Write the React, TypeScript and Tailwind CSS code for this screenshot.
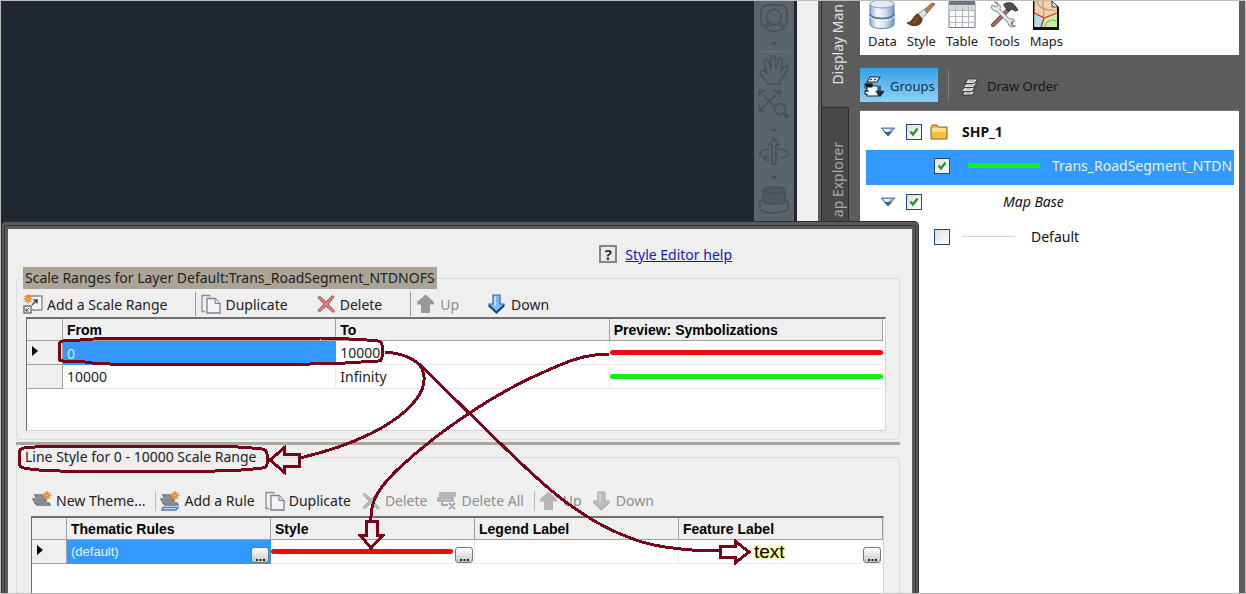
import type { ReactNode } from "react";

const Spark = ({ x, y }: { x: number; y: number }) => (
  <g stroke="#f08a2c" strokeWidth="1.6">
    <path d={`M${x - 4.5} ${y}h9M${x} ${y - 4.5}v9M${x - 3} ${y - 3}l6 6M${x + 3} ${y - 3}l-6 6`} />
    <circle cx={x} cy={y} r="1.6" fill="#ffe9a8" />
  </g>
);

const AddRangeIcon = () => (
  <svg width="20" height="20" viewBox="0 0 20 20" fill="none">
    <path d="M3 2H19V16H9" fill="#f4f4f4" stroke="#8b8d92" strokeWidth="1.4" />
    <path d="M9 11L14 6M10.5 6H14V9.5" stroke="#3b4148" strokeWidth="1.5" />
    <rect x="1" y="12" width="7" height="7" fill="#fff" stroke="#666a70" strokeWidth="1.4" />
    <path d="M3 17L6 14M3 14.5V17H5.5" stroke="#3b4148" />
    <Spark x={5} y={5} />
  </svg>
);

const DuplicateIcon = () => (
  <svg width="20" height="20" viewBox="0 0 20 20" fill="none">
    <path d="M4 17.5H1V1.5H9" stroke="#8a8c96" strokeWidth="1.3" />
    <path d="M9 1.5V3" stroke="#8a8c96" />
    <path d="M6 4.5H14L19 9.5V19H6Z" fill="#f3f4f6" stroke="#7d808c" strokeWidth="1.3" />
    <path d="M14 4.5V9.5H19" fill="#dcdee4" stroke="#7d808c" />
  </svg>
);

const DeleteIcon = ({ off }: { off?: boolean }) => (
  <svg width="20" height="20" viewBox="0 0 20 20" fill="none">
    <path d="M2 3.5L3.5 2L10 8L16.5 1.5L18 3L12 10L18.5 17L17 18.5L10 12L3.5 18L2 16.5L8 10Z"
      fill={off ? "#b9b9b9" : "#e98080"} stroke={off ? "#b0b0b0" : "#97474b"} strokeWidth="1" />
  </svg>
);

const DeleteAllIcon = () => (
  <svg width="20" height="20" viewBox="0 0 20 20" fill="none" stroke="#a9a9a9" strokeWidth="1.6">
    <path d="M3 2H18V5H3ZM1 7H16V10H1Z" fill="#c4c4c4" />
    <path d="M5 11V14H11M12 12L18 18M18 12L12 18" strokeWidth="2" />
  </svg>
);

const UpIcon = ({ light }: { light?: boolean }) => (
  <svg width="20" height="20" viewBox="0 0 20 20">
    <path d="M9.5 0.5L18 8V10.5H14V19H5V10.5H1V8Z" fill={light ? "#b7b7b7" : "#999"} />
  </svg>
);

const DownIcon = ({ off }: { off?: boolean }) => (
  <svg width="20" height="20" viewBox="0 0 20 20">
    <path d="M6 1H13V10H17V12L9.5 19L2 12V10H6Z" fill={off ? "#bdbdbd" : "#7cb9f2"} stroke={off ? "#adadad" : "#3464a4"} strokeWidth="1.2" />
    <path d="M8 2V12" stroke={off ? "#d0d0d0" : "#bfe0ff"} strokeWidth="2" />
    {!off && <path d="M2 11.5L9.5 18.5L17 11.5" fill="none" stroke="#1b3a78" strokeWidth="1.8" />}
  </svg>
);

const RulesIcon = ({ add }: { add?: boolean }) => (
  <svg width="20" height="20" viewBox="0 0 20 20" fill="none" stroke="#6b6f78" strokeWidth="1.4">
    <path d="M3 4H11L12 6H4Z" fill="#d8d9dd" />
    <path d="M1 8H13L14 10H2Z" fill="#d8d9dd" />
    <path d="M3 12H17L18 14H5Z" fill="#d8d9dd" />
    {add && <path d="M3 16.5H18L16 19H2Z" fill="#dcecff" stroke="#3f7fd0" />}
    <Spark x={15} y={4.5} />
  </svg>
);

const LayersIcon = () => (
  <svg width="18" height="18" viewBox="0 0 18 18" fill="#e4e4e4" stroke="#2a2a2a" strokeWidth="0.9">
    <path d="M1 17L4 13H14L11 17Z" />
    <path d="M2 13.500L1 12.500L4 9H14L11 13.500Z" />
    <path d="M4 9.500L3 8.500L6 5H16L12 9.500Z" />
    <path d="M4 5.500L7 1H17L13 5.500Z" />
    <path d="M8 3H13M6 7H12M5 11H10M5 15H10" stroke="#8e8e8e" />
  </svg>
);

const GroupsIcon = () => (
  <svg width="20" height="22" viewBox="0 0 20 22" stroke="#262b30" strokeWidth="1.1">
    <path d="M3 6L6 1H16L13 6Z" fill="#eef6fb" />
    <path d="M6 4L8 3M10 4L12 3" />
    <path d="M1 8H8L9 10H14V20H3V18H1V15H3V12H1Z" fill="#f7fbfd" />
    <path d="M1 8H8V11H2M1 15H5" />
    <path d="M16 10V19M12.500 15.500H19.500L16 20Z" fill="#262b30" strokeWidth="1.4" />
  </svg>
);

const DataIcon = () => (
  <svg width="28" height="28" viewBox="0 0 28 28">
    <linearGradient id="drum">
      <stop stopColor="#8fb0d6" />
      <stop offset="0.3" stopColor="#f6fafe" />
      <stop offset="0.65" stopColor="#cfdff0" />
      <stop offset="1" stopColor="#6f94c2" />
    </linearGradient>
    <path d="M2 3V23C2 29 26 29 26 23V3Z" fill="url(#drum)" stroke="#5d7ea8" />
    <ellipse cx="14" cy="3" rx="12" ry="4" fill="#e1ebf6" stroke="#7f9bbd" />
    <path d="M2 13C2 19 26 19 26 13" fill="none" stroke="#4f73a3" strokeWidth="1.600" />
    <path d="M2 15C2 21 26 21 26 15" fill="none" stroke="#f2f7fc" />
  </svg>
);

const StyleIcon = () => (
  <svg width="28" height="28" viewBox="0 0 28 28">
    <path d="M25 2L17 9L20 12L28 3Z" fill="#c47a3c" stroke="#7c4925" strokeWidth="0.8" />
    <path d="M17 8L20 12L15 18L11 13Z" fill="#dfe1e4" stroke="#7a7c80" strokeWidth="0.8" />
    <path d="M11 13C6 14 7 20 0 22C5 26 15 26 15 18Z" fill="#6b3d22" stroke="#45240f" strokeWidth="0.8" />
    <path d="M11 16C9 18 9 21 6 22" stroke="#a86c44" fill="none" />
  </svg>
);

const TableIcon = () => (
  <svg width="28" height="28" viewBox="0 0 28 28">
    <path d="M1 1H27V26.500H1Z" fill="#fcfcfd" stroke="#777b82" />
    <path d="M1 0H27V4H1Z" fill="#6f7680" />
    <path d="M1 4H27V9H1Z" fill="#d4d8de" />
    <path d="M1 9.500H27M1 15.500H27M1 21.500H27M7.500 5V26M14.500 5V26M20.500 5V26" stroke="#b4b7bd" />
  </svg>
);

const ToolsIcon = () => (
  <svg width="28" height="28" viewBox="0 0 28 28" strokeLinecap="round" fill="none">
    <path d="M3 24L19 8" stroke="#5a3b32" strokeWidth="4" />
    <path d="M3 24L19 8" stroke="#a5786a" strokeWidth="2.400" />
    <path d="M14 3C18 1 23 1 25 5L28 9L25 10L22 8L18 10L15 6Z" fill="#4b4e54" stroke="#303236" />
    <path d="M7 8L21 22" stroke="#777b82" strokeWidth="4.500" />
    <path d="M5 1L8 4L6 6L2 4C0 8 4 11 8 10C12 8 11 2 5 1Z" fill="#e3e5e8" stroke="#777b82" />
    <path d="M25 25L21 24L21 21L25 20C23 16 18 18 18 21C18 26 22 27 25 25Z" fill="#e3e5e8" stroke="#777b82" />
    <path d="M7 8L20 21" stroke="#e3e5e8" strokeWidth="3" />
  </svg>
);

const MapsIcon = () => (
  <svg width="28" height="30" viewBox="0 0 28 30">
    <path d="M1 0H20L27 6V29H1Z" fill="#111" />
    <path d="M2.500 0H19L25 6V26H2.500Z" fill="#f9cda8" />
    <path d="M2.500 12L12 17L9 26H2.500Z" fill="#b5dfe8" />
    <path d="M12 17L25 12V26H9Z" fill="#c6f09a" />
    <path d="M5 0C7 8 15 10 25 9M13 26C14 20 19 18 25 20M12 0C8 4 14 8 11 16" fill="none" stroke="#b2a37c" strokeWidth="1.200" />
    <path d="M2.500 12L12 17L25 12M12 17L9 26" fill="none" stroke="#c53a2b" strokeWidth="1.300" />
    <path d="M20 0V6H26Z" fill="#e8f1fa" stroke="#243c5e" />
  </svg>
);

const FolderIcon = () => (
  <svg width="18" height="16" viewBox="0 0 18 16">
    <path d="M1 15V3H2V1H7L8 3H17V15Z" fill="#f4bf3d" stroke="#8d6420" />
    <path d="M2 4H16V8H2Z" fill="#fde08a" />
  </svg>
);

const Expander = () => (
  <button aria-label="Collapse" className="shrink-0">
    <svg width="16" height="12" viewBox="0 0 16 12">
      <path d="M1 2H15L8 10Z" fill="#86adcb" stroke="#56789a" strokeLinejoin="round" />
      <path d="M3 3H11L7 7Z" fill="#e6f3fc" />
      <path d="M4 6L8 10L12 6Z" fill="#3f6184" />
    </svg>
  </button>
);

const Check = ({ id, checked }: { id: string; checked?: boolean }) => (
  <span className="grid shrink-0">
    <input id={id} type="checkbox" defaultChecked={checked}
      className="peer col-start-1 row-start-1 size-4 appearance-none border border-[#1f4a78] bg-linear-to-br from-[#dcdfe0] to-white" />
    <svg viewBox="0 0 16 16" className="pointer-events-none invisible col-start-1 row-start-1 size-4 peer-checked:visible">
      <path d="M4.500 7.500L7 10.500L11.500 4.500" fill="none" stroke="#2f9433" strokeWidth="2.400" />
    </svg>
  </span>
);

const NavBar = () => (
  <div className="w-10 shrink-0 bg-[#5c646b]">
    <svg width="40" height="220" viewBox="754 1 40 220" fill="none" stroke="#474f57" strokeWidth="1.5">
      <path d="M767 5H781Q787 6 787 14V19Q786 31 774 31Q761 31 761 18V14Q761 6 767 5Z" />
      <circle cx="774" cy="17" r="7.500" />
      <path d="M765 26L769 22M784 26L779 22M766 27Q774 22 783 27" />
      <path d="M770 42H778L774 45ZM770 129H778L774 132ZM770 176H778L774 179Z" fill="#474f57" stroke="none" />
      <path d="M757 51.500H791" stroke="#6b7379" strokeWidth="1" />
      <path d="M768 84C765 79 760 75 760 72C762 69 765 71 767 74L764 61C765 58 768 59 769 62L771 70L771 58C772 55 775 56 775 58L776 69L779 59C781 57 783 59 782 61L781 71L785 66C788 65 789 67 787 70L781 80L780 84Z" />
      <path d="M760 92L776 108M779 92L760 110M759 97V91H765M774 91H780V97M759 105V111H765" />
      <circle cx="780" cy="109" r="5.500" fill="#5c646b" />
      <path d="M784 113L788 118" strokeWidth="3.500" />
      <path d="M772 164V145H769L774 138L779 145H776V164Z" />
      <path d="M769 149C756 151 757 158 770 158M779 149C791 151 791 157 780 158M768 154L764 158L768 162" />
      <path d="M763 202V190C763 186 785 186 785 190V202C782 205 766 205 763 202Z" fill="#50585f" />
      <path d="M763 190C766 194 782 194 785 190M763 200H760V209C763 214 785 214 788 209V200H785" />
    </svg>
  </div>
);

const paletteTools = [
  { name: "Data", icon: <DataIcon /> },
  { name: "Style", icon: <StyleIcon /> },
  { name: "Table", icon: <TableIcon /> },
  { name: "Tools", icon: <ToolsIcon /> },
  { name: "Maps", icon: <MapsIcon /> },
];

const Palette = () => (
  <div className="flex w-[427px] shrink-0 bg-[#5c5c5c] pr-1.5">
    <div className="flex w-[42px] shrink-0 flex-col pl-[3px]">
      <button className="flex h-[106px] w-[30px] items-end border-l border-[#333] pb-[22px] pl-1.5 text-[14px] leading-5 text-[#e2e2e2]">
        <span className="rotate-180 [writing-mode:vertical-rl]">Display Man</span>
      </button>
      <button className="flex w-[28px] flex-1 items-start border border-[#2e2e2e] bg-[#484848] pt-[34px] pl-1.5 text-[14px] leading-5 text-[#a8a8a8]">
        <span className="rotate-180 [writing-mode:vertical-rl]">ap Explorer</span>
      </button>
    </div>
    <div className="flex min-w-0 flex-1 flex-col">
      <div className="flex h-[54px] gap-2.5 bg-white pl-2">
        {paletteTools.map((t) => (
          <button key={t.name} className="flex flex-col items-center text-[13px] leading-5 text-[#222]">
            <span className="h-[30px]">{t.icon}</span>
            {t.name}
          </button>
        ))}
      </div>
      <div className="flex h-[55px] items-center pt-1 text-[13px] text-[#161616]">
        <button className="flex h-[34px] w-[78px] items-center gap-1.5 bg-linear-to-b from-[#2ba3e6] to-[#8fd0f5] pt-1 pl-1 text-[#123048]">
          <GroupsIcon />
          Groups
        </button>
        <span className="ml-2.5 h-8 w-px bg-[#7d7d7d]" />
        <button className="ml-3 flex items-center gap-2 pt-1">
          <LayersIcon />
          Draw Order
        </button>
      </div>
      <div className="flex-1 border-t border-[#777] bg-white pt-0.5 pr-[5px] pl-1.5 text-[14px] text-[#111]">
        <div className="flex h-[37px] items-center pl-[14px]">
          <Expander />
          <span className="ml-2.5 flex"><Check id="shp" checked /></span>
          <span className="mr-3.5 ml-2"><FolderIcon /></span>
          <label htmlFor="shp" className="font-bold">SHP_1</label>
        </div>
        <div className="flex h-[35px] items-center overflow-hidden bg-[#3399ff] pb-1 pl-[68px] text-[#e6f4ff]">
          <Check id="road" checked />
          <span className="mr-3 ml-[18px] h-[5px] w-[72px] shrink-0 bg-[#0bf41b]" />
          <label htmlFor="road">Trans_RoadSegment_NTDN</label>
        </div>
        <div className="flex h-[35px] items-center pb-0.5 pl-[14px]">
          <Expander />
          <span className="ml-2.5 flex"><Check id="base" checked /></span>
          <label htmlFor="base" className="ml-[81px] italic">Map Base</label>
        </div>
        <div className="flex h-[35px] items-center pb-0.5 pl-[68px]">
          <Check id="default" />
          <span className="mr-4 ml-3 h-px w-[53px] bg-[#d6d6d6]" />
          <label htmlFor="default">Default</label>
        </div>
      </div>
    </div>
  </div>
);

const Tool = ({ icon, children, off }: { icon: ReactNode; children: string; off?: boolean }) => (
  <button disabled={off} className="flex shrink-0 items-center gap-1 whitespace-nowrap disabled:text-[#8e8e8e]">
    {icon}
    {children}
  </button>
);

const Th = ({ children }: { children?: string }) => (
  <th className="h-[22px] border-r border-b border-[#a0a0a0] bg-[#efefef] p-0 pl-1 text-left font-['Liberation_Sans',sans-serif] text-[14px] leading-5 font-bold text-black">
    {children}
  </th>
);

const RowHead = ({ current }: { current?: boolean }) => (
  <td className="border-r border-b border-[#a0a0a0] bg-[#efefef] p-0 pb-1 pl-[5px]">
    {current && (
      <svg width="6" height="10" viewBox="0 0 6 10"><path d="M0 0L6 5L0 10Z" /></svg>
    )}
  </td>
);

const More = ({ name }: { name: string }) => (
  <button aria-label={name} className="flex h-4 w-[18px] shrink-0 items-end justify-center rounded-[3px] border border-[#777] bg-linear-to-b from-white to-[#c6c6c6] pb-px">
    <svg width="9" height="2" viewBox="0 0 9 2"><path d="M0 0H2V2H0ZM3.500 0H5.500V2H3.500ZM7 0H9V2H7Z" fill="#222" /></svg>
  </button>
);

const cell = "h-6 border-r border-b border-[#ececec] p-0 pl-1";

const StyleEditor = () => (
  <div className="absolute top-[220px] right-[326px] bottom-0 left-0 rounded-t-[5px] border-x border-t border-[#2d2d2d] bg-[#5a5a5a] px-0.5 pt-[3px]">
    <div className="h-full rounded-t-[3px] border-x border-t border-[#333] px-[3px] pt-[3px]">
      <div className="h-full overflow-hidden bg-[#efefef] pt-4 pr-3 pl-2 text-[14px] text-[#222]">
        <div className="flex h-[18px] items-center justify-end gap-2 pr-[168px]">
          <span className="flex size-[18px] items-center justify-center border-2 border-[#858585] bg-[#e9eaee] text-[15px] font-bold text-[#333]">?</span>
          <a href="#help" className="text-[#1a16b8] underline">Style Editor help</a>
        </div>

        <fieldset className="mt-1 rounded-[3px] border border-[#dcdcdc] pb-2">
          <legend className="ml-1.5 h-[22px] bg-[#aaa597] px-0.5 leading-[22px] whitespace-nowrap">
            Scale Ranges for Layer Default:Trans_RoadSegment_NTDNOFS
          </legend>
          <div className="flex h-7 items-center gap-7 pt-0.5 pl-1.5">
            <Tool icon={<AddRangeIcon />}>Add a Scale Range</Tool>
            <div className="flex items-center gap-[5px]">
              <span className="h-6 w-px bg-[#999]" />
              <Tool icon={<DuplicateIcon />}>Duplicate</Tool>
            </div>
            <Tool icon={<DeleteIcon />}>Delete</Tool>
            <div className="flex items-center gap-[5px]">
              <span className="h-6 w-px bg-[#999]" />
              <Tool icon={<UpIcon />} off>Up</Tool>
            </div>
            <Tool icon={<DownIcon />}>Down</Tool>
          </div>
          <div className="mr-[13px] ml-[9px] h-[114px] border border-t-2 border-[#d4d4d4] border-t-[#707070] border-l-[#707070] bg-white pr-0.5">
            <table className="w-full table-fixed border-separate border-spacing-0">
              <thead>
                <tr>
                  <th className="w-9 border-r border-b border-[#a0a0a0] bg-[#efefef]" />
                  <Th>From</Th>
                  <Th>To</Th>
                  <Th>Preview: Symbolizations</Th>
                </tr>
              </thead>
              <tbody>
                <tr>
                  <RowHead current />
                  <td className="h-6 bg-[#3399ff] p-0 pl-1 text-[#d6f2ff]">0</td>
                  <td className={cell}>10000</td>
                  <td className="h-6 border-b border-[#ececec] p-0"><div className="h-[5px] rounded-full bg-[#ee0c0c]" /></td>
                </tr>
                <tr>
                  <RowHead />
                  <td className={cell}>10000</td>
                  <td className={cell}>Infinity</td>
                  <td className="h-6 border-b border-[#ececec] p-0"><div className="h-[5px] rounded-full bg-[#12ee1c]" /></td>
                </tr>
              </tbody>
            </table>
          </div>
        </fieldset>

        <div className="mt-0.5 h-[3px] bg-[#aaa69b]" />

        <fieldset className="rounded-[3px] border border-[#dcdcdc]">
          <legend className="ml-1.5 h-6 px-0.5 leading-6 whitespace-nowrap">Line Style for 0 - 10000 Scale Range</legend>
          <div className="mt-4 flex h-[31px] items-center gap-2.5 pl-[15px]">
            <Tool icon={<RulesIcon />}>New Theme...</Tool>
            <div className="flex items-center gap-1">
              <span className="h-5 w-px bg-[#bbb]" />
              <Tool icon={<RulesIcon add />}>Add a Rule</Tool>
            </div>
            <Tool icon={<DuplicateIcon />}>Duplicate</Tool>
            <Tool icon={<DeleteIcon off />} off>Delete</Tool>
            <Tool icon={<DeleteAllIcon />} off>Delete All</Tool>
            <div className="flex items-center gap-1">
              <span className="h-5 w-px bg-[#bbb]" />
              <Tool icon={<UpIcon light />} off>Up</Tool>
            </div>
            <Tool icon={<DownIcon off />} off>Down</Tool>
          </div>
          <div className="mr-[15px] ml-[14px] h-24 border border-t-2 border-[#d4d4d4] border-t-[#707070] border-l-[#707070] bg-white">
            <table className="w-full table-fixed border-separate border-spacing-0">
              <thead>
                <tr>
                  <th className="w-[35px] border-r border-b border-[#a0a0a0] bg-[#efefef]" />
                  <Th>Thematic Rules</Th>
                  <Th>Style</Th>
                  <Th>Legend Label</Th>
                  <Th>Feature Label</Th>
                </tr>
              </thead>
              <tbody>
                <tr>
                  <RowHead current />
                  <td className="h-6 bg-[#3399ff] p-0 pr-0.5 pl-1">
                    <div className="flex h-[22px] items-end justify-between">
                      <span className="self-center font-['Liberation_Sans',sans-serif] text-[13px] text-[#e6f6ff]">(default)</span>
                      <More name="Edit rule" />
                    </div>
                  </td>
                  <td className="h-6 border-r border-b border-[#ececec] p-0 pr-px">
                    <div className="flex h-[22px] items-end">
                      <div className="mr-0.5 h-[5px] flex-1 self-center rounded-full bg-[#ee0c0c]" />
                      <More name="Edit style" />
                    </div>
                  </td>
                  <td className={cell} />
                  <td className="h-6 border-b border-[#ececec] p-0 pr-0.5">
                    <div className="flex h-[22px] items-end justify-between pl-[75px]">
                      <span className="self-center font-['Liberation_Sans',sans-serif] text-[19px] leading-5 text-black [text-shadow:0_0_2px_#ffff66,0_0_3px_#ffff66,0_0_3px_#ffff66]">text</span>
                      <More name="Edit label" />
                    </div>
                  </td>
                </tr>
              </tbody>
            </table>
          </div>
        </fieldset>
      </div>
    </div>
  </div>
);

const Annotations = () => (
  <svg className="pointer-events-none absolute top-0 left-0" width="1244" height="592" viewBox="1 1 1244 592"
    fill="none" stroke="#78041c" strokeWidth="3" shapeRendering="crispEdges">
    <path d="M59 345Q59 341 63 341L80 340Q100 338 140 338H320Q360 339 378 341Q382 341 382 345V357Q382 361 378 361L345 363Q330 364 310 364H110Q95 364 85 362L63 361Q59 361 59 357Z" />
    <path d="M19 453Q19 449 24 448Q40 446 70 446H215Q245 447 262 449Q267 450 267 454V464Q267 468 262 468Q240 471 215 471H60Q40 471 24 468Q19 467 19 463Z" />
    <path d="M385 352C402 353 412 358 419 364C429 377 423 392 414 402C395 425 355 445 300 458" />
    <path d="M419 364L505 448C525 467 548 490 570 505C600 527 635 543 665 547C685 550 700 551 719 551" />
    <path d="M609 354C580 354 560 365 535 376C500 392 445 425 397 470C380 487 370 500 371 520" />
    <path d="M270 460L284 448V454H299V466H284V472Z" />
    <path d="M366 521H377V535H383L371 548L360 535H366Z" />
    <path d="M720 546H735V541L749 552L735 563V557H720Z" />
  </svg>
);

export default function App() {
  return (
    <div className="relative flex h-screen overflow-hidden border border-[#bcbcbc] bg-white font-['Noto_Sans','Open_Sans',sans-serif]">
      <main className="flex-1 bg-[#212830]" />
      <NavBar />
      <div className="w-6 shrink-0 border-l-[3px] border-[#23272c] bg-[#efefef]" />
      <Palette />
      <StyleEditor />
      <Annotations />
    </div>
  );
}
